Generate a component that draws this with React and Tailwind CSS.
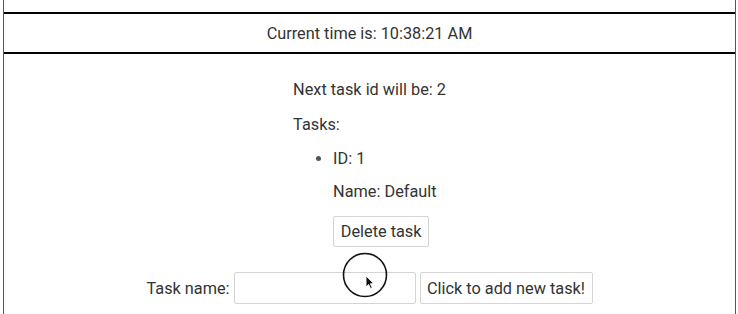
import React from "react";

export default function App() {
  return (
    <div className="relative h-[314px] w-[738px] overflow-hidden bg-white text-[16.3px] text-[#333] font-['Roboto',_'Liberation_Sans',_sans-serif]">
      <div className="ml-[3px] mr-[2px] h-full border-x border-[#555] pt-[12px]">
        <div className="flex h-[42px] items-center justify-center border-y-2 border-black pt-[2px] leading-5">
          Current time is: 10:38:21 AM
        </div>
        <div className="flex flex-col items-center">
          <div className="mt-[26px] flex flex-col items-start leading-5">
            <p>Next task id will be: 2</p>
            <p className="mt-[15px]">Tasks:</p>
            <ul className="mt-[14px] list-disc pl-[40px] marker:text-[#555]">
              <li>
                <p>ID: 1</p>
                <p className="mt-[13px]">Name: Default</p>
                <button className="mt-[14px] h-[31px] w-[96px] rounded-[2px] border border-[#d4d4d4] bg-white pt-[1px] text-[16.3px] text-[#333]">
                  Delete task
                </button>
              </li>
            </ul>
          </div>
          <div className="mt-[25px] flex items-center leading-5">
            <span className="pt-[1px]">Task name:</span>
            <input
              className="ml-[4px] h-[32px] w-[182px] rounded-[2px] border border-[#d4d4d4] bg-white px-2 outline-none"
              type="text"
            />
            <button className="ml-[4px] h-[32px] w-[173px] rounded-[2px] border border-[#d4d4d4] bg-white pt-[1px] text-[16.3px] text-[#333]">
              Click to add new task!
            </button>
          </div>
        </div>
      </div>
      <svg
        className="pointer-events-none absolute left-[342px] top-[252px]"
        width="46"
        height="46"
        viewBox="0 0 46 46"
      >
        <circle cx="23" cy="23" r="21.5" fill="none" stroke="#111" strokeWidth="1.6" />
        <path
          d="M24 24 L24 35 L26.6 32.5 L28.6 36.6 L30.3 35.8 L28.4 31.8 L31.8 31.6 Z"
          fill="#111"
          stroke="#fff"
          strokeWidth="0.9"
          strokeLinejoin="round"
        />
      </svg>
    </div>
  );
}
